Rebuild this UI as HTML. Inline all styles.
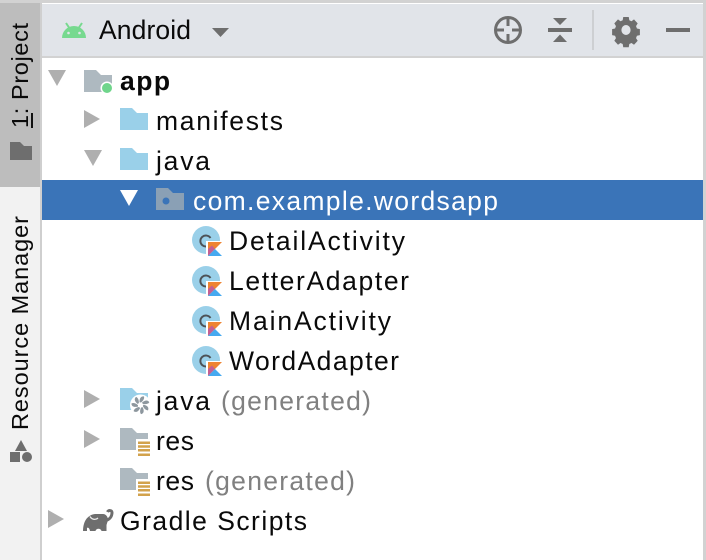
<!DOCTYPE html>
<html>
<head>
<meta charset="utf-8">
<style>
html,body{margin:0;padding:0;background:#fff}
svg{display:block}
text{font-family:"Liberation Sans",sans-serif;font-size:26.500px;fill:#0a0a0a}
.g{fill:#808080}
</style>
</head>
<body>
<svg width="706" height="560" viewBox="0 0 706 560" xmlns="http://www.w3.org/2000/svg">
<defs>
<g id="rt"><path d="M0 0L16 9L0 18Z" fill="#afafaf"/></g>
<g id="dt"><path d="M0 0H18L9 16Z" fill="#afafaf"/></g>
<g id="f"><path d="M0 0H12L17 5H28V22H0Z"/></g>
<g id="cls">
<circle cx="14" cy="14" r="14" fill="#9ad0e9"/>
<path d="M18.500 12A5.500 5.500 0 1 0 18.500 18" fill="none" stroke="#4d5257" stroke-width="2"/>
<rect x="14" y="15" width="17" height="16" fill="#fff"/>
<path d="M16 30V16H30L23 23Z" fill="#ee8433"/>
<path d="M16 30V23L20 19.500L23 23Z" fill="#c55f92"/>
<path d="M16 30L23 23L30 30Z" fill="#45a9f0"/>
</g>
<g id="resdoc">
<rect x="16" y="11" width="14" height="18" fill="#fff"/>
<path d="M18 13.500h12v2.500H18zM18 17.200h12v2.500H18zM18 21h12v2.500H18zM18 25.500h12v2.500H18z" fill="#d2a24c"/>
</g>
<path id="blade" d="M0.500 -2.500C3 -4.500 4 -6.500 3.500 -8.500C1 -9 -1 -7.500 -1 -2.800Z" fill="#8d979e"/>
</defs>

<rect width="706" height="560" fill="#fff"/>
<rect width="706" height="3" fill="#d2d2d2"/>
<rect x="0" y="3" width="40" height="557" fill="#f2f2f2"/>
<rect x="0" y="3" width="40" height="184" fill="#bdbdbd"/>
<rect x="40" y="3" width="2" height="557" fill="#cfcfcf"/>
<rect x="42" y="4" width="661" height="52" fill="#e1e4e9"/>
<rect x="42" y="56" width="661" height="2" fill="#d2d2d2"/>
<rect x="703" y="3" width="3" height="557" fill="#d2d2d2"/>

<text transform="translate(28 128) rotate(-90)" textLength="105" lengthAdjust="spacing" style="font-size:23.500px">1: Project</text>
<rect x="31" y="113" width="2" height="15" fill="#111"/>
<path d="M10 142H20L24 146H32V160H10Z" fill="#6e6e6e"/>

<text transform="translate(28 430) rotate(-90)" textLength="214" lengthAdjust="spacing" style="font-size:23.500px">Resource Manager</text>
<path d="M21 440L27 451H15Z" fill="#6e6e6e"/>
<rect x="10" y="452" width="10" height="10" fill="#6e6e6e"/>
<circle cx="27" cy="457" r="5" fill="#6e6e6e"/>

<!-- Android icon -->
<path d="M62 38A12 12 0 0 1 86 38Z" fill="#77d98f"/>
<path d="M66 23L70 29M82 23L78 29" stroke="#77d98f" stroke-width="2"/>
<circle cx="68.500" cy="33" r="1.300" fill="#e1e4e9"/><circle cx="79.500" cy="33" r="1.300" fill="#e1e4e9"/>
<text x="99" y="39" textLength="92" lengthAdjust="spacing">Android</text>
<path d="M212 28H229L220.500 37Z" fill="#6e6e6e"/>

<!-- Toolbar icons -->
<circle cx="508" cy="30" r="12.500" fill="none" stroke="#6e6e6e" stroke-width="3"/>
<path d="M508 17V26M508 34V43M495 30H504M512 30H521" stroke="#6e6e6e" stroke-width="3"/>
<path d="M548 28H572V32H548Z" fill="#6e6e6e"/>
<path d="M553 18H567L560 25Z M553 42H567L560 34.500Z" fill="#6e6e6e"/>
<rect x="592" y="10" width="2" height="40" fill="#cdcfd2"/>
<g transform="translate(626 30) scale(.92 1) translate(-626 -30)">
<path fill="#6e6e6e" fill-rule="evenodd" d="M623 17h6l.6 3.200 2.400 1 2.700-1.800 4 4-1.800 2.700 1 2.400 3.200.6v6l-3.200.6-1 2.400 1.800 2.700-4 4-2.700-1.800-2.400 1-.6 3.200h-6l-.6-3.200-2.400-1-2.700 1.800-4-4 1.800-2.700-1-2.400-3.200-.6v-6l3.200-.6 1-2.400-1.800-2.700 4-4 2.700 1.800 2.400-1zM626 25a5 5 0 1 0 0 10a5 5 0 0 0 0-10z"/>
</g>
<rect x="666" y="28" width="24" height="4" fill="#6e6e6e"/>

<!-- Selected row -->
<rect x="42" y="180" width="661" height="40" fill="#3a74b8"/>

<!-- Tree -->
<use href="#dt" x="48" y="70"/>
<g transform="translate(84 70)" fill="#aeb9c0"><use href="#f"/></g>
<circle cx="107" cy="88" r="6.500" fill="#fff"/><circle cx="107" cy="88" r="5" fill="#6fd58b"/>
<text x="120" y="90" textLength="50" lengthAdjust="spacing" style="font-weight:700">app</text>

<use href="#rt" x="84" y="110"/>
<g transform="translate(120 108)" fill="#9ad0e9"><use href="#f"/></g>
<text x="156" y="130" textLength="127" lengthAdjust="spacing">manifests</text>

<use href="#dt" x="84" y="150"/>
<g transform="translate(120 148)" fill="#9ad0e9"><use href="#f"/></g>
<text x="156" y="170" textLength="54" lengthAdjust="spacing">java</text>

<path d="M120 190H138L129 206Z" fill="#fff"/>
<g transform="translate(156 188)" fill="#8aa0b5"><use href="#f"/></g>
<circle cx="166" cy="201" r="3.500" fill="#3a74b8"/>
<text x="193" y="210" textLength="305" lengthAdjust="spacing" style="fill:#fff">com.example.wordsapp</text>

<use href="#cls" x="192" y="226"/>
<text x="229" y="250" textLength="176" lengthAdjust="spacing">DetailActivity</text>
<use href="#cls" x="192" y="266"/>
<text x="229" y="290" textLength="180" lengthAdjust="spacing">LetterAdapter</text>
<use href="#cls" x="192" y="306"/>
<text x="229" y="330" textLength="162" lengthAdjust="spacing">MainActivity</text>
<use href="#cls" x="192" y="346"/>
<text x="229" y="370" textLength="170" lengthAdjust="spacing">WordAdapter</text>

<use href="#rt" x="84" y="390"/>
<g transform="translate(120 388)" fill="#9ad0e9"><use href="#f"/></g>
<circle cx="140.500" cy="405" r="10.500" fill="#fff"/>
<g transform="translate(140.500 405)">
<use href="#blade"/>
<use href="#blade" transform="rotate(51)"/>
<use href="#blade" transform="rotate(103)"/>
<use href="#blade" transform="rotate(154)"/>
<use href="#blade" transform="rotate(206)"/>
<use href="#blade" transform="rotate(257)"/>
<use href="#blade" transform="rotate(309)"/>
</g>
<text x="156" y="410" textLength="54" lengthAdjust="spacing">java</text>
<text x="221" y="410" textLength="150" lengthAdjust="spacing" class="g">(generated)</text>

<use href="#rt" x="84" y="430"/>
<g transform="translate(120 428)" fill="#aeb9c0"><use href="#f"/></g>
<use href="#resdoc" x="120" y="428"/>
<text x="156" y="450" textLength="38" lengthAdjust="spacing">res</text>

<g transform="translate(120 468)" fill="#aeb9c0"><use href="#f"/></g>
<use href="#resdoc" x="120" y="468"/>
<text x="156" y="490" textLength="38" lengthAdjust="spacing">res</text>
<text x="205" y="490" textLength="150" lengthAdjust="spacing" class="g">(generated)</text>

<use href="#rt" x="48" y="510"/>
<path fill="#6e6e6e" d="M83 531C83 522 87 515 95 514L103 514C106 514 108 517 108 520L106.500 525V531H101.500C101 528 96 528 95.500 531H90C89.500 528 88 527 87 528V531Z"/>
<path d="M104 521C110 520 112 516 112 512.500C112 510 108.500 510 107.500 512" fill="none" stroke="#6e6e6e" stroke-width="3"/>
<path d="M90 516.500C92 520 96 520 98 518" fill="none" stroke="#e9e9e9" stroke-width="1.300"/>
<text x="120" y="530" textLength="187" lengthAdjust="spacing">Gradle Scripts</text>
</svg>
</body>
</html>
